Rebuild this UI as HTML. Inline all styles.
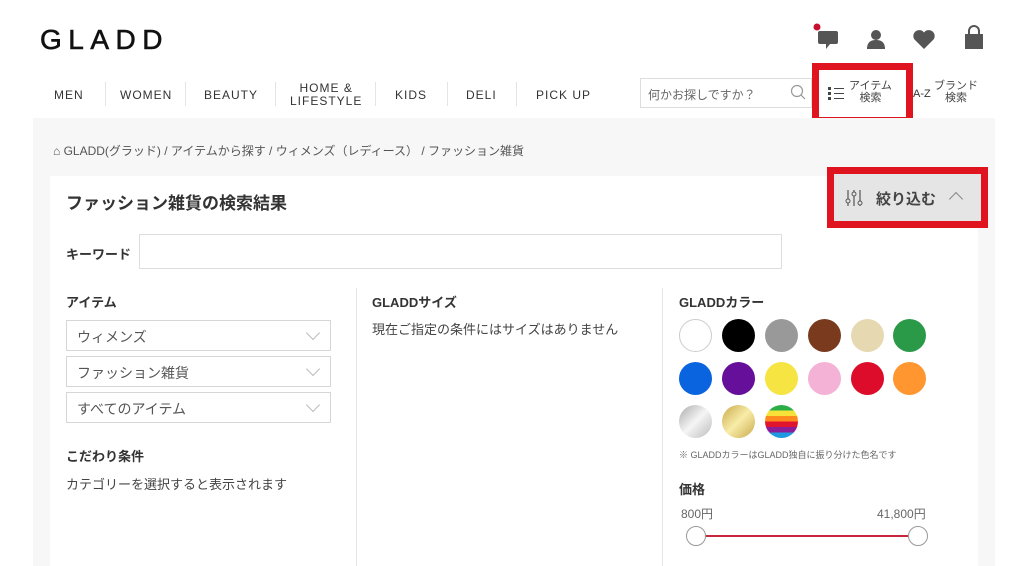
<!DOCTYPE html>
<html><head><meta charset="utf-8"><style>
*{margin:0;padding:0;box-sizing:border-box}
body{width:1024px;height:566px;overflow:hidden;background:#fff;font-family:"Liberation Sans","Noto Sans CJK JP",sans-serif;color:#333;position:relative}
.a{position:absolute}
.nav span{position:absolute;font-size:12px;letter-spacing:1px;color:#333;text-align:center;line-height:13px}
.sep{position:absolute;top:82px;width:1px;height:24px;background:#e5e5e5}
.sel{position:absolute;left:66px;width:265px;height:31px;border:1px solid #d6d6d6;background:#fff;font-size:14px;color:#555;padding:6px 10px}
.sel i{position:absolute;right:12px;top:7px;width:10px;height:10px;border-right:1px solid #bbb;border-bottom:1px solid #bbb;transform:rotate(45deg)}
.c{position:absolute;width:33px;height:33px;border-radius:50%}
h4{font-size:13px;font-weight:bold;color:#333}
</style></head><body>
<div class="a" style="left:40px;top:24px;font-size:28px;letter-spacing:6.5px;color:#111;font-weight:normal;-webkit-text-stroke:0.6px #111">GLADD</div>
<svg class="a" style="left:810px;top:22px" width="180" height="30">
<circle cx="7" cy="5" r="3.5" fill="#c8102e"/>
<path d="M10 9h16a2 2 0 0 1 2 2v9a2 2 0 0 1-2 2h-6l-4 5v-5h-6a2 2 0 0 1-2-2v-9a2 2 0 0 1 2-2z" fill="#555"/>
<circle cx="66" cy="13" r="5" fill="#555"/><path d="M57 27c0-7 4-9 9-9s9 2 9 9z" fill="#555"/>
<path d="M114 27l-9.5-9.5a5.2 5.2 0 0 1 9.5-7 5.2 5.2 0 0 1 9.5 7z" fill="#555"/>
<path d="M155 12h18v15h-18z" fill="#555"/><path d="M159 12v-3a5 5 0 0 1 10 0v3" stroke="#555" stroke-width="2" fill="none"/>
</svg>
<div class="nav">
<span style="left:54px;top:89px">MEN</span>
<div class="sep" style="left:105px"></div>
<span style="left:120px;top:89px">WOMEN</span>
<div class="sep" style="left:185px"></div>
<span style="left:204px;top:89px">BEAUTY</span>
<div class="sep" style="left:275px"></div>
<span style="left:290px;top:82px">HOME &amp;<br>LIFESTYLE</span>
<div class="sep" style="left:375px"></div>
<span style="left:395px;top:89px">KIDS</span>
<div class="sep" style="left:447px"></div>
<span style="left:466px;top:89px">DELI</span>
<div class="sep" style="left:516px"></div>
<span style="left:536px;top:89px">PICK UP</span>
</div>
<div class="a" style="left:640px;top:78px;width:172px;height:30px;border:1px solid #ddd;font-size:12px;color:#666;padding:7px 7px">何かお探しですか？</div>
<svg class="a" style="left:790px;top:84px" width="16" height="16"><circle cx="7" cy="7" r="5.5" stroke="#999" fill="none" stroke-width="1.2"/><path d="M11 11l4 4" stroke="#999" stroke-width="1.2"/></svg>
<div class="a" style="left:812px;top:63px;width:101px;height:61px;border:7px solid #e0141e"></div>
<svg class="a" style="left:828px;top:86px" width="18" height="14"><rect x="0" y="1" width="3" height="3" fill="#444"/><rect x="0" y="6" width="3" height="3" fill="#444"/><rect x="0" y="11" width="3" height="3" fill="#444"/><path d="M6 2.5h10M6 7.5h10M6 12.5h10" stroke="#444"/></svg>
<div class="a" style="left:849px;top:80px;font-size:11px;line-height:12px;text-align:center;color:#444">アイテム<br>検索</div>
<div class="a" style="left:913px;top:88px;font-size:11px;color:#333">A-Z</div>
<div class="a" style="left:934px;top:80px;font-size:11px;line-height:12px;text-align:center;color:#444">ブランド<br>検索</div>
<div class="a" style="left:33px;top:118px;width:962px;height:448px;background:#f7f7f7"></div>
<div class="a" style="left:53px;top:142px;font-size:12px;color:#555">⌂ GLADD(グラッド) / アイテムから探す / ウィメンズ（レディース） / ファッション雑貨</div>
<div class="a" style="left:50px;top:176px;width:928px;height:390px;background:#fff"></div>
<div class="a" style="left:66px;top:189px;font-size:17px;font-weight:bold;color:#333">ファッション雑貨の検索結果</div>
<div class="a" style="left:827px;top:167px;width:161px;height:61px;border:7px solid #e0141e;background:#e5e5e5"></div>
<svg class="a" style="left:845px;top:188px" width="20" height="20"><path d="M3 2v16M9 2v16M15 2v16" stroke="#555" stroke-width="1.2"/><circle cx="3" cy="13" r="2" fill="#e5e5e5" stroke="#555"/><circle cx="9" cy="6" r="2" fill="#e5e5e5" stroke="#555"/><circle cx="15" cy="15" r="2" fill="#e5e5e5" stroke="#555"/></svg>
<div class="a" style="left:876px;top:188px;font-size:15px;font-weight:bold;color:#444">絞り込む</div>
<div class="a" style="left:951px;top:194px;width:10px;height:10px;border-left:1px solid #888;border-top:1px solid #888;transform:rotate(45deg)"></div>
<div class="a" style="left:66px;top:244px;font-size:13px;font-weight:bold">キーワード</div>
<div class="a" style="left:139px;top:234px;width:643px;height:35px;border:1px solid #ddd"></div>
<div class="a" style="left:356px;top:288px;width:1px;height:278px;background:#e5e5e5"></div>
<div class="a" style="left:662px;top:288px;width:1px;height:278px;background:#e5e5e5"></div>
<h4 class="a" style="left:66px;top:292px">アイテム</h4>
<div class="sel" style="top:320px">ウィメンズ<i></i></div>
<div class="sel" style="top:356px">ファッション雑貨<i></i></div>
<div class="sel" style="top:392px">すべてのアイテム<i></i></div>
<h4 class="a" style="left:66px;top:446px">こだわり条件</h4>
<div class="a" style="left:66px;top:474px;font-size:13px;color:#444">カテゴリーを選択すると表示されます</div>
<h4 class="a" style="left:372px;top:292px">GLADDサイズ</h4>
<div class="a" style="left:372px;top:319px;font-size:13px;color:#444">現在ご指定の条件にはサイズはありません</div>
<h4 class="a" style="left:679px;top:292px">GLADDカラー</h4>
<div class="c" style="left:679px;top:319px;border:1px solid #ccc;background:#fff"></div>
<div class="c" style="left:722px;top:319px;background:#000"></div>
<div class="c" style="left:765px;top:319px;background:#999"></div>
<div class="c" style="left:808px;top:319px;background:#7a3a1e"></div>
<div class="c" style="left:851px;top:319px;background:#e6d8b0"></div>
<div class="c" style="left:893px;top:319px;background:#2a9a48"></div>
<div class="c" style="left:679px;top:362px;background:#0a64e0"></div>
<div class="c" style="left:722px;top:362px;background:#650f9a"></div>
<div class="c" style="left:765px;top:362px;background:#f5e442"></div>
<div class="c" style="left:808px;top:362px;background:#f4b2d6"></div>
<div class="c" style="left:851px;top:362px;background:#dc0c2a"></div>
<div class="c" style="left:893px;top:362px;background:#ff9630"></div>
<div class="c" style="left:679px;top:405px;background:linear-gradient(135deg,#aaa,#f5f5f5 50%,#bbb)"></div>
<div class="c" style="left:722px;top:405px;background:linear-gradient(135deg,#c9a94a,#f8eca8 50%,#c9a94a)"></div>
<div class="c" style="left:765px;top:405px;background:linear-gradient(#2bae48 0 17%,#f7e23a 17% 34%,#ff8a1e 34% 50%,#e0142e 50% 67%,#8a1e9a 67% 84%,#1e9ae0 84%)"></div>
<div class="a" style="left:679px;top:448px;font-size:9px;color:#666">※ GLADDカラーはGLADD独自に振り分けた色名です</div>
<h4 class="a" style="left:679px;top:479px">価格</h4>
<div class="a" style="left:681px;top:505px;font-size:12px;color:#666">800円</div>
<div class="a" style="left:877px;top:505px;font-size:12px;color:#666">41,800円</div>
<div class="a" style="left:696px;top:535px;width:222px;height:2px;background:#c8283c"></div>
<div class="a" style="left:686px;top:526px;width:20px;height:20px;border-radius:50%;border:1px solid #999;background:#fff"></div>
<div class="a" style="left:908px;top:526px;width:20px;height:20px;border-radius:50%;border:1px solid #999;background:#fff"></div>
</body></html>
